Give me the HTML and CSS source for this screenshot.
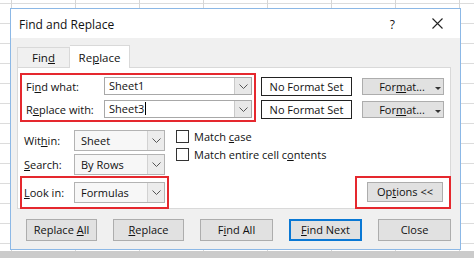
FILE: index.html
```html
<!DOCTYPE html>
<html lang="en">
<head>
  <meta charset="UTF-8">
  <title>Find and Replace</title>
  <link rel="stylesheet" href="styles.css">
</head>
<body>
<div class="dialog">
  <div class="titlebar">
    <span class="title">Find and Replace</span>
    <span class="help">?</span>
    <svg class="close-x" width="11" height="11" viewBox="0 0 11 11"><path d="M0.5 0.5 L10.5 10.5 M10.5 0.5 L0.5 10.5" stroke="#222" stroke-width="1.1" fill="none"/></svg>
  </div>

  <div class="body">
    <div class="tabs">
      <div class="tab">Fin<u>d</u></div>
      <div class="tab active">Re<u>p</u>lace</div>
    </div>

    <div class="panel">
      <!-- find / replace rows -->
      <div class="group-top">
        <div class="mark mark-fields">
          <div class="field-row">
            <label class="lbl lbl-wide">Fi<u>n</u>d what:</label>
            <div class="textcombo">
              <span class="val">Sheet1</span>
              <span class="drop"><svg width="9" height="5" viewBox="0 0 9 5"><path d="M0.5 0.5 L4.5 4.5 L8.5 0.5" stroke="#555" fill="none"/></svg></span>
            </div>
          </div>
          <div class="field-row">
            <label class="lbl lbl-wide">R<u>e</u>place with:</label>
            <div class="textcombo">
              <span class="val">Sheet3<span class="caret"></span></span>
              <span class="drop"><svg width="9" height="5" viewBox="0 0 9 5"><path d="M0.5 0.5 L4.5 4.5 L8.5 0.5" stroke="#555" fill="none"/></svg></span>
            </div>
          </div>
        </div>

        <div class="format-col">
          <div class="format-row">
            <div class="preview">No Format Set</div>
            <div class="btn btn-format"><span>For<u>m</u>at...</span><span class="tri"></span></div>
          </div>
          <div class="format-row">
            <div class="preview">No Format Set</div>
            <div class="btn btn-format"><span>For<u>m</u>at...</span><span class="tri"></span></div>
          </div>
        </div>
      </div>

      <!-- search options -->
      <div class="group-bottom">
        <div class="opts-col">
          <div class="opt-row">
            <label class="lbl">Wit<u>h</u>in:</label>
            <div class="combo"><span class="val">Sheet</span><span class="drop"><svg width="9" height="5" viewBox="0 0 9 5"><path d="M0.5 0.5 L4.5 4.5 L8.5 0.5" stroke="#555" fill="none"/></svg></span></div>
          </div>
          <div class="opt-row">
            <label class="lbl"><u>S</u>earch:</label>
            <div class="combo"><span class="val">By Rows</span><span class="drop"><svg width="9" height="5" viewBox="0 0 9 5"><path d="M0.5 0.5 L4.5 4.5 L8.5 0.5" stroke="#555" fill="none"/></svg></span></div>
          </div>
          <div class="mark mark-look">
            <div class="opt-row">
              <label class="lbl"><u>L</u>ook in:</label>
              <div class="combo"><span class="val">Formulas</span><span class="drop"><svg width="9" height="5" viewBox="0 0 9 5"><path d="M0.5 0.5 L4.5 4.5 L8.5 0.5" stroke="#555" fill="none"/></svg></span></div>
            </div>
          </div>
        </div>

        <div class="check-col">
          <div class="check"><span class="box"></span><span>Match <u>c</u>ase</span></div>
          <div class="check"><span class="box"></span><span>Match entire cell c<u>o</u>ntents</span></div>
        </div>

        <div class="mark mark-options">
          <div class="btn btn-options">Op<u>t</u>ions &lt;&lt;</div>
        </div>
      </div>
    </div>

    <div class="actions">
      <div class="btn btn-action">Replace <u>A</u>ll</div>
      <div class="btn btn-action"><u>R</u>eplace</div>
      <div class="btn btn-action wide">F<u>i</u>nd All</div>
      <div class="btn btn-action wide default"><u>F</u>ind Next</div>
      <div class="btn btn-action wide">Close</div>
    </div>
  </div>
</div>
<div class="sheet-bar"></div>
</body>
</html>
```

FILE: styles.css
```css
* { margin: 0; padding: 0; box-sizing: border-box; }

body {
  font-family: 'Open Sans', 'Noto Sans', sans-serif;
  font-size: 11px;
  color: #111;
  background-color: #fff;
  background-image:
    linear-gradient(to right, #d6d6d6 1px, transparent 1px),
    linear-gradient(to bottom, #dcdcdc 1px, transparent 1px);
  background-size: 64px 20px;
  background-position: 11px 3px;
  overflow: hidden;
}

u { text-decoration: underline; text-underline-offset: 1px; }

.dialog {
  width: 451px;
  height: 242px;
  margin: 8px 0 0 10px;
  border: 1px solid #8cb8e6;
  background: #f0f0f0;
  display: flex;
  flex-direction: column;
}

.titlebar {
  height: 29px;
  background: #fff;
  display: flex;
  align-items: center;
  padding-left: 8px;
}

.title { font-size: 12px; flex: 1; padding-top: 1px; }

.help { font-size: 12px; margin-right: 37px; padding-top: 1px; }

.close-x { margin-right: 17px; }

/* Body */
.body {
  padding: 7px 9px 0 6px;
}

.tabs {
  display: flex;
  align-items: flex-end;
  height: 22px;
}

.tab {
  height: 20px;
  width: 53px;
  line-height: 19px;
  text-align: center;
  border: 1px solid #d9d9d9;
  border-bottom: none;
  background: #f0f0f0;
  font-size: 11.5px;
}

.tab.active {
  height: 23px;
  width: 60px;
  margin-bottom: -1px;
  background: #fff;
  border-left: none;
  line-height: 23px;
  position: relative;
  z-index: 1;
}

.panel {
  height: 142px;
  border: 1px solid #d9d9d9;
  background: #fff;
  padding: 5px 0 2px 2px;
}

/* red annotation boxes */
.mark {
  border: 2px solid #e5282e;
}

.group-top {
  display: flex;
}

.mark-fields {
  width: 236px;
  height: 49px;
  padding: 2px 2px 0 4px;
  display: flex;
  flex-direction: column;
  gap: 5px;
}

.field-row {
  display: flex;
  align-items: center;
  height: 18px;
}

.lbl { display: inline-block; width: 50px; }
.lbl-wide { width: 78px; }

.textcombo {
  width: 148px;
  height: 18px;
  border: 1px solid #a8a8a8;
  display: flex;
  background: #fff;
}

.textcombo .val { flex: 1; padding-left: 4px; line-height: 16px; }

.caret {
  display: inline-block;
  width: 1px;
  height: 13px;
  background: #000;
  vertical-align: -2px;
  margin-left: 1px;
}

.drop {
  width: 17px;
  display: flex;
  align-items: center;
  justify-content: center;
  background: #e8e8e8;
  border-left: 1px solid #c9c9c9;
}

.format-col {
  padding: 4px 0 0 5px;
  display: flex;
  flex-direction: column;
  gap: 4px;
}

.format-row {
  display: flex;
  align-items: center;
  height: 19px;
  gap: 10px;
}

.preview {
  width: 91px;
  height: 19px;
  border: 1px solid #222;
  text-align: center;
  line-height: 17px;
}

.btn {
  background: #e1e1e1;
  border: 1px solid #adadad;
  text-align: center;
}

.btn-format {
  width: 82px;
  height: 17px;
  line-height: 15px;
  padding-left: 14px;
}

.tri {
  display: inline-block;
  width: 0;
  height: 0;
  border-left: 3px solid transparent;
  border-right: 3px solid transparent;
  border-top: 3px solid #333;
  margin-left: 10px;
  vertical-align: middle;
}

/* lower group */
.group-bottom {
  display: flex;
  margin-top: 8px;
}

.opts-col {
  width: 149px;
  display: flex;
  flex-direction: column;
}

.opt-row {
  display: flex;
  align-items: center;
  height: 21px;
  padding-left: 4px;
  margin-bottom: 3px;
}

.mark-look {
  margin-top: -2px;
  height: 33px;
  padding: 2px 0 0 0;
}

.mark-look .opt-row { padding-left: 2px; margin-top: 2px; }

.combo {
  width: 91px;
  height: 21px;
  border: 1px solid #b3b3b3;
  background: #f7f7f7;
  display: flex;
}

.combo .val { flex: 1; padding-left: 6px; line-height: 19px; }

.combo .drop { background: #ececec; border-left: 1px solid #d2d2d2; }

.check-col {
  margin-left: 7px;
  display: flex;
  flex-direction: column;
  gap: 5px;
}

.check {
  display: flex;
  align-items: center;
  height: 13px;
  gap: 5px;
}

.box {
  width: 13px;
  height: 13px;
  border: 1px solid #333;
  background: #fff;
}

.mark-options {
  margin-left: auto;
  margin-right: -1px;
  align-self: flex-end;
  width: 96px;
  height: 33px;
  padding: 4px 0 0 10px;
}

.btn-options {
  width: 76px;
  height: 20px;
  line-height: 18px;
}

/* bottom buttons */
.actions {
  display: flex;
  justify-content: space-between;
  margin-top: 10px;
  padding-left: 9px;
  padding-right: 0;
}

.btn-action {
  width: 71px;
  height: 22px;
  line-height: 20px;
}

.btn-action.wide { width: 73px; }

.btn-action.default {
  border: 2px solid #0a78d4;
  line-height: 18px;
}

.sheet-bar {
  height: 7px;
  margin-top: 1px;
  background: #cbcbcb;
}
```
